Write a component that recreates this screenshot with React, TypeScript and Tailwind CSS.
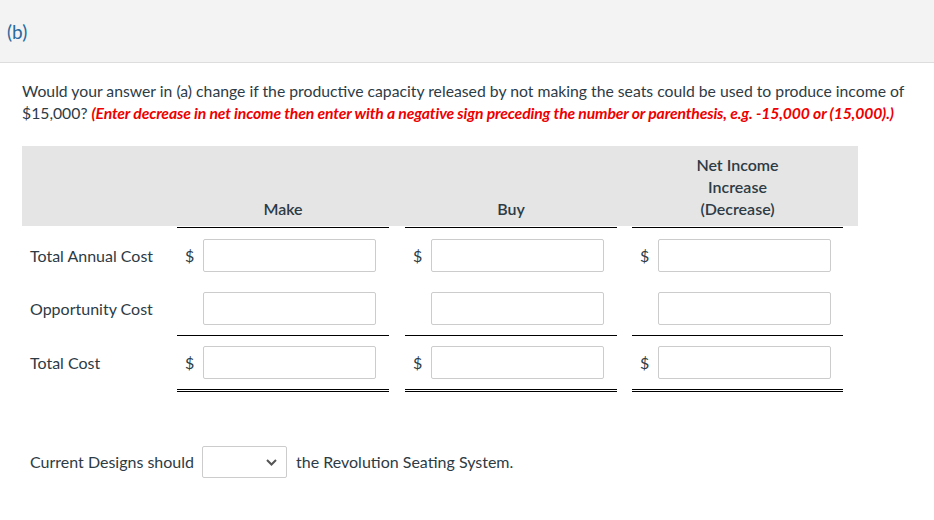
import React from "react";

const cols = "grid grid-cols-[155px_212px_16px_212px_15px_211px_15px]";

function Cell({ dollar }: { dollar?: boolean }) {
  return (
    <div className="flex items-center pl-[8px]">
      <span className="w-[18px] text-[16px]">{dollar ? "$" : ""}</span>
      <input className="h-[33px] w-[173px] rounded-[2px] border border-[#cccccc] bg-white" />
    </div>
  );
}

export default function App() {
  return (
    <div
      className="min-h-[520px] bg-white text-[#2d3b45]"
      style={{ fontFamily: "Lato, 'Open Sans', sans-serif" }}
    >
      {/* Part header */}
      <div className="flex h-[63px] items-center border-b border-[#dddddd] bg-[#f3f3f3] pl-[7px] pt-[2px] text-[19px] text-[#2a6a9e]">
        (b)
      </div>

      <div className="px-[22px]">
        <p className="mt-[17px] text-[15.75px] leading-[22px]">
          Would your answer in (a) change if the productive capacity released by not making the seats could be
          used to produce income of $15,000?{" "}
          <span className="font-bold italic tracking-[-0.15px] text-[#ee0000]">
            (Enter decrease in net income then enter with a negative sign preceding the number or parenthesis,
            e.g. -15,000 or (15,000).)
          </span>
        </p>

        {/* Table */}
        <div className="mt-[22px] w-[836px]">
          <div className={`${cols} h-[80px] items-end bg-[#e5e5e5] pb-[6px] text-[16px] font-semibold leading-[22px]`}>
            <div />
            <div className="text-center">Make</div>
            <div />
            <div className="text-center">Buy</div>
            <div />
            <div className="text-center">
              Net Income
              <br />
              Increase
              <br />
              (Decrease)
            </div>
            <div />
          </div>
          <div className={`${cols} mt-px`}>
            <div />
            <div className="h-px bg-black" />
            <div />
            <div className="h-px bg-black" />
            <div />
            <div className="h-px bg-black" />
            <div />
          </div>

          <div className={cols}>
            <div className="flex items-center pl-[8px] pt-[11px] pb-[10px] text-[16px]">Total Annual Cost</div>
            <div className="pt-[11px] pb-[10px]">
              <Cell dollar />
            </div>
            <div />
            <div className="pt-[11px] pb-[10px]">
              <Cell dollar />
            </div>
            <div />
            <div className="pt-[11px] pb-[10px]">
              <Cell dollar />
            </div>
            <div />
          </div>

          <div className={cols}>
            <div className="flex items-center pl-[8px] pt-[10px] pb-[11px] text-[16px]">Opportunity Cost</div>
            <div className="border-b border-black pt-[10px] pb-[10px]">
              <Cell />
            </div>
            <div />
            <div className="border-b border-black pt-[10px] pb-[10px]">
              <Cell />
            </div>
            <div />
            <div className="border-b border-black pt-[10px] pb-[10px]">
              <Cell />
            </div>
            <div />
          </div>

          <div className={cols}>
            <div className="flex items-center pl-[8px] pt-[10px] pb-[13px] text-[16px]">Total Cost</div>
            <div className="border-b-[3px] border-double border-black pt-[10px] pb-[10px]">
              <Cell dollar />
            </div>
            <div />
            <div className="border-b-[3px] border-double border-black pt-[10px] pb-[10px]">
              <Cell dollar />
            </div>
            <div />
            <div className="border-b-[3px] border-double border-black pt-[10px] pb-[10px]">
              <Cell dollar />
            </div>
            <div />
          </div>
        </div>

        {/* Conclusion */}
        <div className="mt-[54px] flex items-center pl-[8px] text-[16px]">
          <span>Current Designs should</span>
          <div className="ml-[8px] flex h-[32px] w-[85px] items-center justify-end rounded-[2px] border border-[#cccccc] bg-white pr-[9px]">
            <svg width="11" height="7" viewBox="0 0 11 7" fill="none">
              <path d="M1 1l4.5 4.5L10 1" stroke="#555555" strokeWidth="2" />
            </svg>
          </div>
          <span className="ml-[9px]">the Revolution Seating System.</span>
        </div>
      </div>
    </div>
  );
}
